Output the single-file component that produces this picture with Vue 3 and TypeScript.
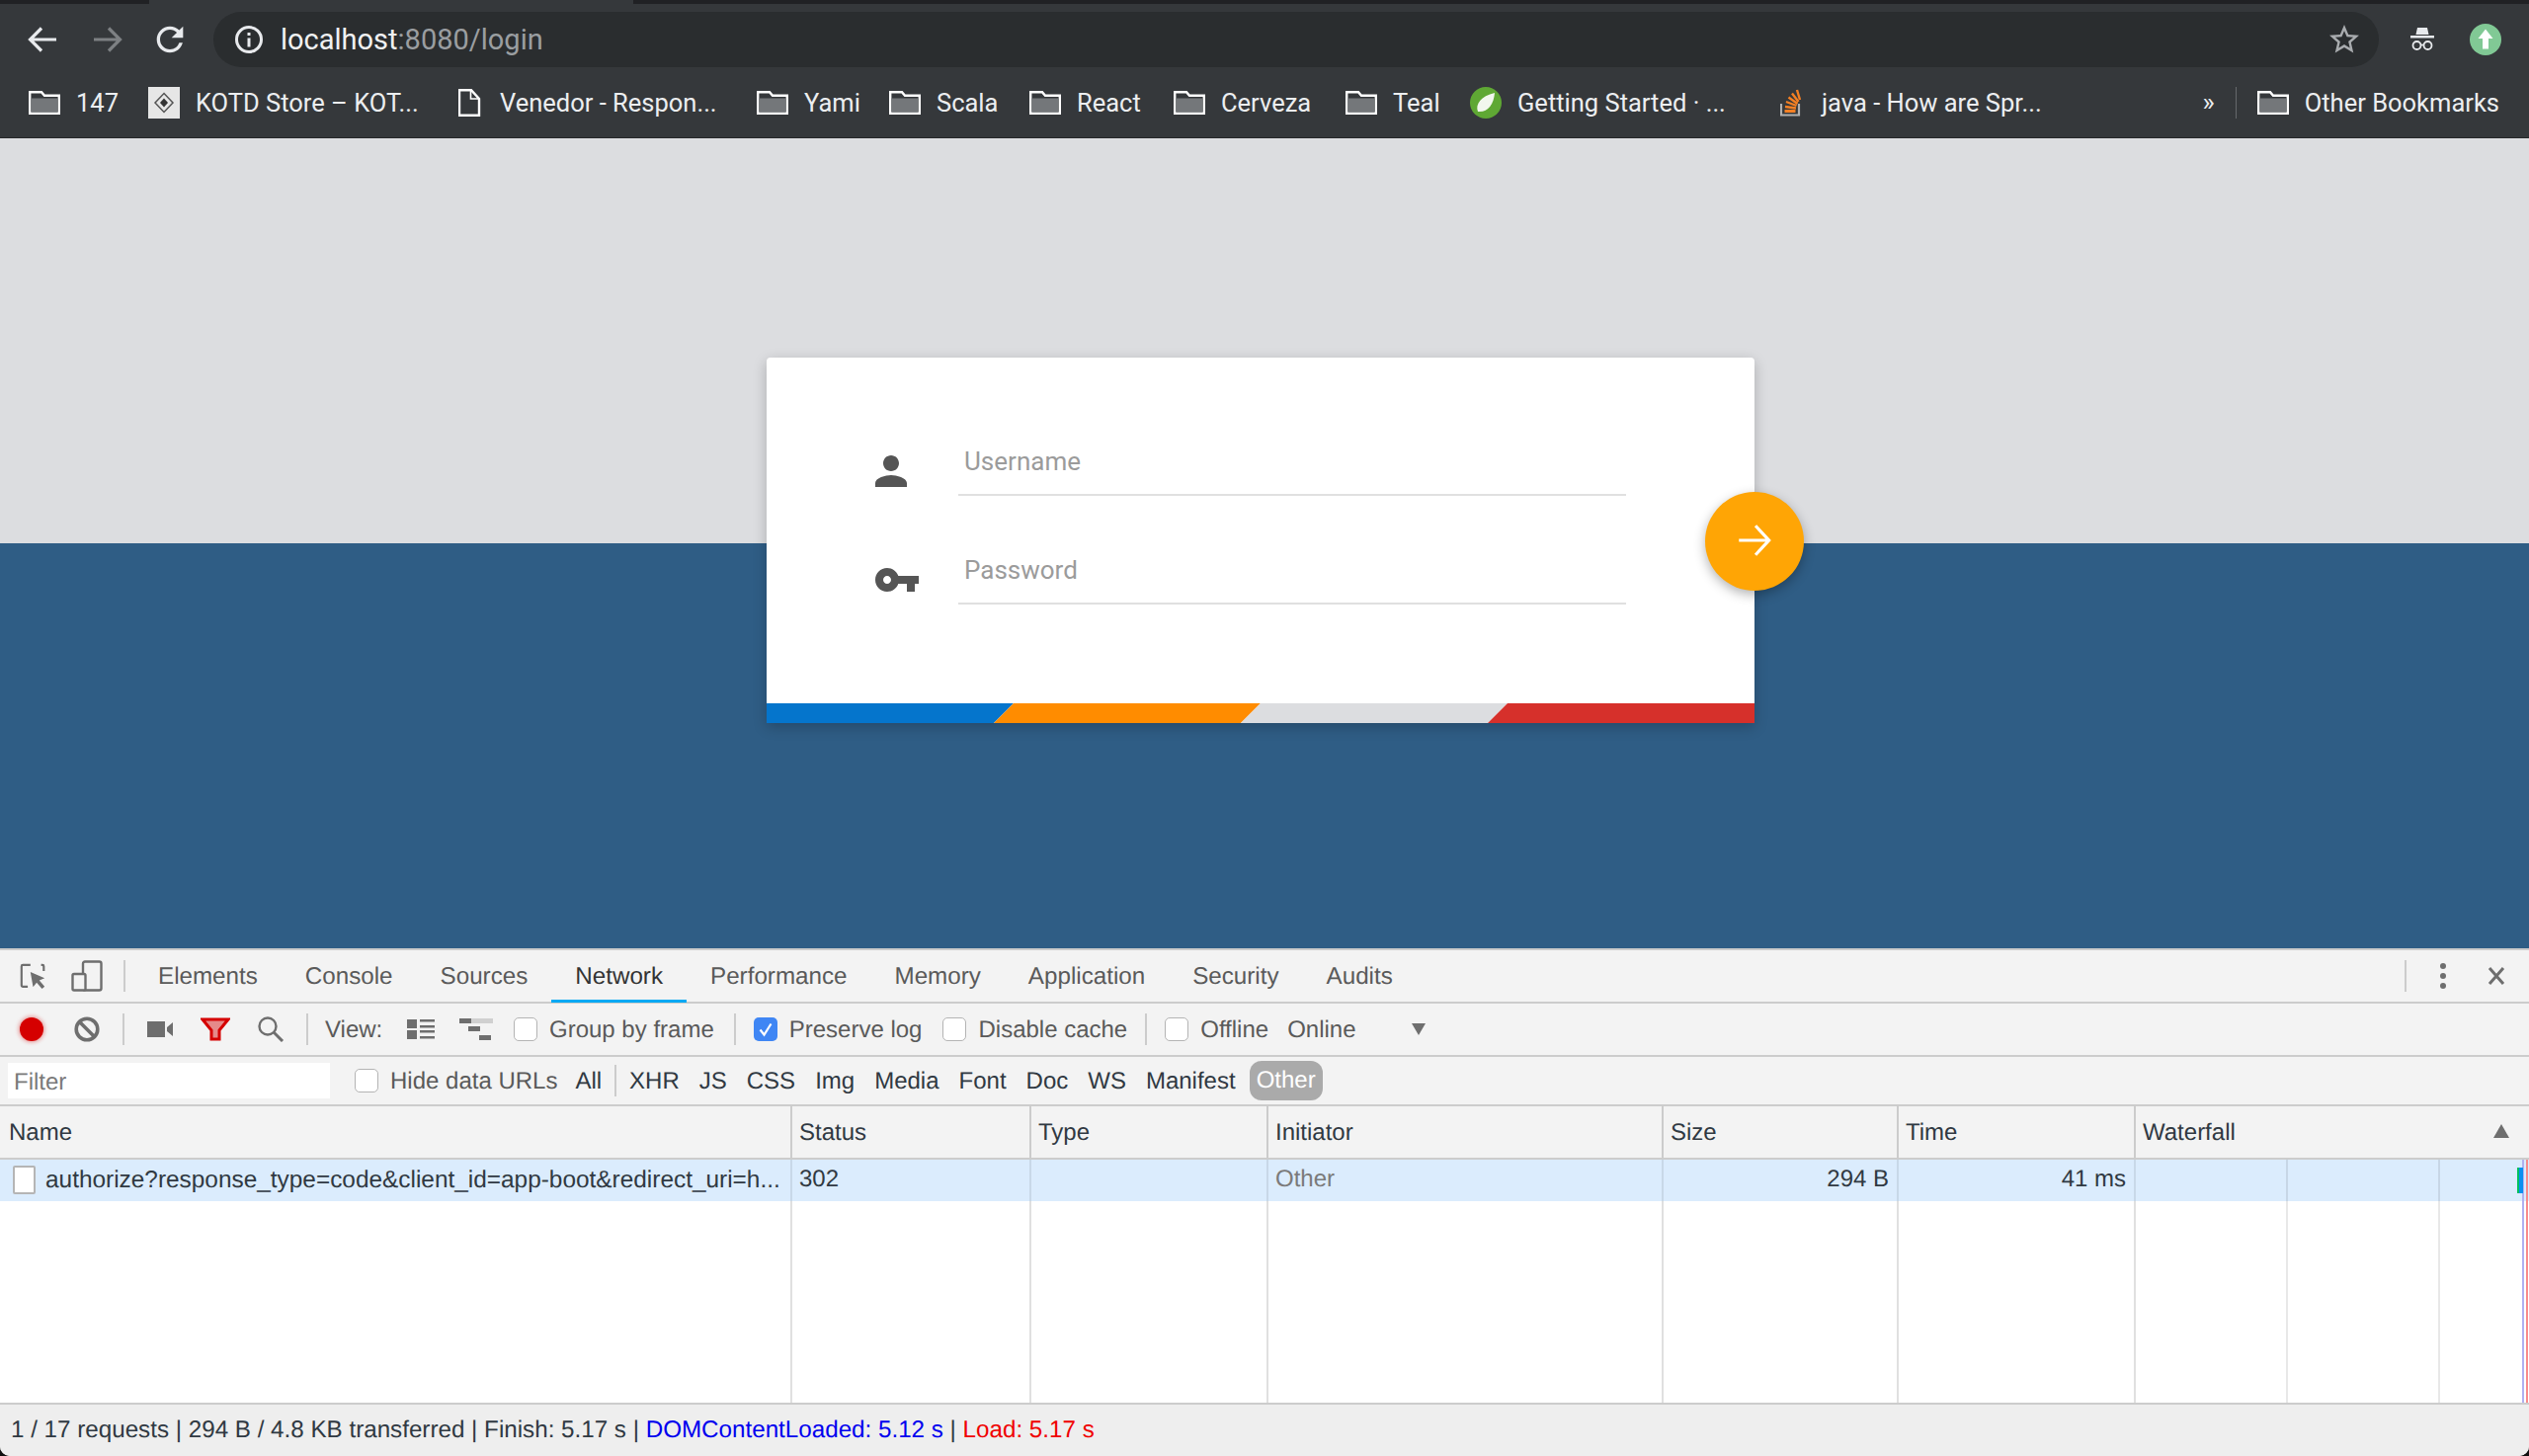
<script setup lang="ts">
type Mark = 'folder' | 'doc' | 'kotd' | 'spring' | 'so'
interface Bookmark { label: string; mark: Mark; width: number }

const bookmarks: Bookmark[] = [
  { label: '147', mark: 'folder', width: 121 },
  { label: 'KOTD Store – KOT...', mark: 'kotd', width: 314 },
  { label: 'Venedor - Respon...', mark: 'doc', width: 302 },
  { label: 'Yami', mark: 'folder', width: 134 },
  { label: 'Scala', mark: 'folder', width: 142 },
  { label: 'React', mark: 'folder', width: 146 },
  { label: 'Cerveza', mark: 'folder', width: 174 },
  { label: 'Teal', mark: 'folder', width: 126 },
  { label: 'Getting Started · ...', mark: 'spring', width: 314 },
  { label: 'java - How are Spr...', mark: 'so', width: 300 },
]
const tabs = ['Elements', 'Console', 'Sources', 'Network', 'Performance', 'Memory', 'Application', 'Security', 'Audits']
const types = ['XHR', 'JS', 'CSS', 'Img', 'Media', 'Font', 'Doc', 'WS', 'Manifest']
const columns = ['Name', 'Status', 'Type', 'Initiator', 'Size', 'Time', 'Waterfall']
</script>

<template>
  <div class="app">
    <header class="chrome">
      <div class="strip"><div class="active-tab"></div></div>
      <div class="toolbar">
        <svg class="nav" viewBox="0 0 40 40"><path d="M33 20H7M18 8.500 6.500 20 18 31.500" fill="none" stroke="#e8eaed" stroke-width="3.200" /></svg>
        <svg class="nav" viewBox="0 0 40 40"><path d="M7 20H33M22 8.500 33.500 20 22 31.500" fill="none" stroke="#7d8083" stroke-width="3.200" /></svg>
        <svg class="nav" viewBox="0 0 24 24"><path fill="#e8eaed" d="M17.650 6.350A7.958 7.958 0 0 0 12 4c-4.420 0-7.990 3.580-7.990 8s3.570 8 7.990 8c3.730 0 6.840-2.550 7.730-6h-2.080A5.990 5.990 0 0 1 12 18c-3.310 0-6-2.690-6-6s2.690-6 6-6c1.660 0 3.140.690 4.220 1.780L13 11h7V4l-2.350 2.350z" /></svg>
        <div class="omnibox">
          <svg class="info" viewBox="0 0 30 30">
            <circle cx="15" cy="15" r="12.500" fill="none" stroke="#e8eaed" stroke-width="3" />
            <rect x="13.500" y="13.500" width="3" height="9" fill="#e8eaed" />
            <rect x="13.500" y="8" width="3" height="3" fill="#e8eaed" />
          </svg>
          <span class="url">localhost<span class="url-dim">:8080/login</span></span>
          <svg class="star" viewBox="0 0 24 24"><path fill="#a9acaf" d="M22 9.240l-7.190-.620L12 2 9.190 8.630 2 9.240l5.460 4.730L5.820 21 12 17.270 18.180 21l-1.630-7.030L22 9.240zM12 15.400l-3.760 2.270 1-4.280-3.320-2.880 4.380-.380L12 6.100l1.710 4.040 4.380.380-3.320 2.880 1 4.280L12 15.400z" /></svg>
        </div>
        <svg class="nav" viewBox="0 0 40 40">
          <path d="M15 8h10l1.500 7h-13z" fill="#e8eaed" />
          <rect x="8" y="16" width="24" height="2.500" fill="#e8eaed" />
          <circle cx="14.500" cy="26" r="4" fill="none" stroke="#e8eaed" stroke-width="1.800" />
          <circle cx="25.500" cy="26" r="4" fill="none" stroke="#e8eaed" stroke-width="1.800" />
          <path d="M18.500 25.500h3" stroke="#e8eaed" stroke-width="1.600" />
        </svg>
        <svg class="nav" viewBox="0 0 40 40">
          <circle cx="20" cy="20" r="16" fill="#81c995" />
          <path d="M20 9.500 27.500 19H23v10.500h-6V19h-4.500z" fill="#fff" />
        </svg>
      </div>
      <div class="bookmarks">
        <div v-for="b in bookmarks" :key="b.label" class="bookmark" :style="{ width: b.width + 'px' }">
          <svg v-if="b.mark === 'folder'" class="mark" viewBox="0 0 32 24">
            <path d="M1.200 22.800V1.200H13l3 3.600h14.800v18z" fill="#35383b" stroke="#fff" stroke-width="2.400" />
            <rect x="2.400" y="7.500" width="27.200" height="14" fill="#74777a" />
          </svg>
          <span v-else-if="b.mark === 'kotd'" class="kotd">
            <svg class="mark-fill" viewBox="0 0 32 32">
              <path d="M16 6.500 25 16 16 25.500 7 16z" fill="none" stroke="#555" stroke-width="1.500" />
              <path d="M16 11.500 20 16 16 20.500 12 16z" fill="#333" />
            </svg>
          </span>
          <svg v-else-if="b.mark === 'doc'" class="mark narrow" viewBox="5 0 32 28">
            <path d="M6 1.200H18L26 10V26.800H6Z" fill="none" stroke="#fff" stroke-width="2.400" />
            <path d="M17.500 1.500V10H26" fill="none" stroke="#fff" stroke-width="1.600" />
          </svg>
          <svg v-else-if="b.mark === 'spring'" class="mark" viewBox="0 0 32 32">
            <circle cx="16" cy="16" r="16" fill="#5fa834" />
            <path d="M25 6C24 18 18 26 8 25 5 18 11 9 25 6z" fill="#f2f7ee" />
          </svg>
          <svg v-else class="mark narrow" viewBox="5 0 32 28">
            <path d="M6 15v11.500H24V15" fill="none" stroke="#b0b0b0" stroke-width="2.200" />
            <path d="M9.500 22.500h11" stroke="#f48024" stroke-width="3" />
            <path d="M10 18l11 1.500M11 13l10.500 4M13.500 8.500l9 6.500M17 4.500l6.500 8.500M22 1l3 10" fill="none" stroke="#f48024" stroke-width="2.400" />
          </svg>
          <span class="bookmark-label">{{ b.label }}</span>
        </div>
        <span class="more">»</span>
        <span class="bar-sep"></span>
        <div class="bookmark other">
          <svg class="mark" viewBox="0 0 32 24">
            <path d="M1.200 22.800V1.200H13l3 3.600h14.800v18z" fill="#35383b" stroke="#fff" stroke-width="2.400" />
            <rect x="2.400" y="7.500" width="27.200" height="14" fill="#74777a" />
          </svg>
          <span class="bookmark-label">Other Bookmarks</span>
        </div>
      </div>
    </header>

    <main class="page">
      <section class="card">
        <div class="form">
          <div class="form-row">
            <svg class="form-icon" viewBox="0 0 24 24"><path fill="#555" d="M12 12c2.210 0 4-1.790 4-4s-1.790-4-4-4-4 1.790-4 4 1.790 4 4 4zm0 2c-2.670 0-8 1.340-8 4v2h16v-2c0-2.660-5.330-4-8-4z" /></svg>
            <label class="field">Username</label>
          </div>
          <div class="form-row">
            <svg class="form-icon key" viewBox="0 0 24 24"><path fill="#555" d="M12.650 10C11.830 7.670 9.610 6 7 6c-3.310 0-6 2.690-6 6s2.690 6 6 6c2.610 0 4.830-1.670 5.650-4H17v4h4v-4h2v-4H12.650zM7 14c-1.100 0-2-.900-2-2s.900-2 2-2 2 .900 2 2-.900 2-2 2z" /></svg>
            <label class="field">Password</label>
          </div>
        </div>
        <svg class="stripe" viewBox="0 0 1000 20" preserveAspectRatio="none">
          <polygon points="0,0 250,0 230,20 0,20" fill="#0575cc" />
          <polygon points="250,0 500,0 480,20 230,20" fill="#ff8c00" />
          <polygon points="500,0 750,0 730,20 480,20" fill="#dcdde0" />
          <polygon points="750,0 1000,0 1000,20 730,20" fill="#d6302b" />
        </svg>
        <button class="fab" type="button" aria-label="Log in">
          <svg class="fab-arrow" viewBox="0 0 40 40"><path d="M5 20H34M21 6 34 20 21 34" fill="none" stroke="#fff" stroke-width="3" /></svg>
        </button>
      </section>
    </main>

    <section class="devtools">
      <nav class="dt-tabs">
        <svg class="inspect" viewBox="0 0 30 30">
          <path d="M12 2H3.500A1.500 1.500 0 0 0 2 3.500V25a1.500 1.500 0 0 0 1.500 1.500H9M24 2h1.500A1.500 1.500 0 0 1 27 3.500V9" fill="none" stroke="#6e6e6e" stroke-width="2.400" />
          <path d="M12 10 28 17l-6 2.500 6 7-3 2.500-6-7-4 5z" fill="#6e6e6e" />
        </svg>
        <svg class="device" viewBox="0 0 32 32">
          <rect x="12" y="1.500" width="18.500" height="29" rx="2" fill="none" stroke="#6e6e6e" stroke-width="2.400" />
          <rect x="1.500" y="14" width="13" height="16.500" rx="1.500" fill="#f3f3f3" stroke="#6e6e6e" stroke-width="2.400" />
        </svg>
        <span class="sep tab-sep"></span>
        <span v-for="t in tabs" :key="t" class="dt-tab" :class="{ on: t === 'Network' }">{{ t }}</span>
        <span class="grow"></span>
        <span class="sep"></span>
        <svg class="kebab" viewBox="0 0 8 30">
          <circle cx="4" cy="5" r="3" fill="#6e6e6e" />
          <circle cx="4" cy="15" r="3" fill="#6e6e6e" />
          <circle cx="4" cy="25" r="3" fill="#6e6e6e" />
        </svg>
        <svg class="close" viewBox="0 0 20 20"><path d="M3 2 17 18M17 2 3 18" stroke="#6e6e6e" stroke-width="3" /></svg>
      </nav>

      <div class="dt-toolbar">
        <span class="tool"><span class="record"></span></span>
        <span class="tool">
          <svg class="ic24" viewBox="0 0 26 26">
            <circle cx="13" cy="13" r="10.800" fill="none" stroke="#6e6e6e" stroke-width="3.600" />
            <path d="M5.500 5.500 20.500 20.500" stroke="#6e6e6e" stroke-width="3.600" />
          </svg>
        </span>
        <span class="sep"></span>
        <span class="tool">
          <svg class="ic24" viewBox="0 0 26 26"><path d="M0 5h18v16H0zM20 11l6-5v14l-6-5z" fill="#6e6e6e" /></svg>
        </span>
        <span class="tool">
          <svg class="ic-filter" viewBox="0 0 30 24"><path d="M2 2H28L19 13V22H11V13Z" fill="#e58a8a" stroke="#d50000" stroke-width="3" /></svg>
        </span>
        <span class="tool">
          <svg class="ic-search" viewBox="0 0 28 26">
            <circle cx="11" cy="10" r="8.500" fill="none" stroke="#6e6e6e" stroke-width="2.400" />
            <path d="M17 16 26 25" stroke="#6e6e6e" stroke-width="3" />
          </svg>
        </span>
        <span class="sep"></span>
        <span class="view-label">View:</span>
        <span class="tool">
          <svg class="ic-list" viewBox="0 0 28 20" fill="#6e6e6e">
            <path d="M0 0h10v9H0zM0 11h10v9H0zM13 0h15v2.500H13zM13 6h15v2.500H13zM13 11h15v2.500H13zM13 17h15v2.500H13z" />
          </svg>
        </span>
        <span class="tool">
          <svg class="ic-fall" viewBox="0 0 34 22">
            <rect x="12" y="0" width="22" height="5" fill="#d0d0d0" />
            <rect x="0" y="0" width="12" height="5" fill="#6e6e6e" />
            <rect x="9" y="8" width="12" height="5" fill="#6e6e6e" />
            <rect x="20" y="17" width="12" height="5" fill="#6e6e6e" />
          </svg>
        </span>
        <span class="check first-check"></span>
        <span class="opt">Group by frame</span>
        <span class="sep sep-opt"></span>
        <span class="check checked">
          <svg viewBox="0 0 24 24"><path d="M6.500 12.500 10.500 17.500 17.500 6.500" fill="none" stroke="#fff" stroke-width="2.200" /></svg>
        </span>
        <span class="opt">Preserve log</span>
        <span class="check next-check"></span>
        <span class="opt">Disable cache</span>
        <span class="sep sep-opt sep-last"></span>
        <span class="check"></span>
        <span class="opt">Offline</span>
        <span class="online">Online</span>
        <span class="caret"></span>
      </div>

      <div class="dt-filter">
        <div class="filter-input">Filter</div>
        <span class="check hide-check"></span>
        <span class="opt">Hide data URLs</span>
        <span class="type all">All</span>
        <span class="sep type-sep"></span>
        <span v-for="t in types" :key="t" class="type">{{ t }}</span>
        <span class="type pill">Other</span>
      </div>

      <div class="table">
        <div class="grid head">
          <div v-for="c in columns" :key="c" class="cell">{{ c }}</div>
          <span class="sort"></span>
        </div>
        <div class="grid row">
          <div class="cell name">
            <span class="doc-icon"></span>
            <span>authorize?response_type=code&amp;client_id=app-boot&amp;redirect_uri=h...</span>
          </div>
          <div class="cell">302</div>
          <div class="cell"></div>
          <div class="cell muted">Other</div>
          <div class="cell num">294 B</div>
          <div class="cell num">41 ms</div>
          <div class="cell"></div>
        </div>
        <div class="grid fill">
          <div v-for="c in columns" :key="c" class="cell"></div>
        </div>
        <div class="tick tick-a"></div>
        <div class="tick tick-b"></div>
        <div class="tick tick-dom"></div>
        <div class="tick tick-load"></div>
        <div class="bar"></div>
      </div>

      <footer class="status">
        <span>1 / 17 requests | 294 B / 4.8 KB transferred | Finish: 5.17 s | </span>
        <span class="blue">DOMContentLoaded: 5.12 s</span>
        <span> | </span>
        <span class="red">Load: 5.17 s</span>
      </footer>
    </section>
  </div>
</template>

<style scoped>
.app {
  width: 2560px;
  height: 1474px;
  display: flex;
  flex-direction: column;
  background: #111;
  overflow: hidden;
}

/* browser chrome */
.chrome {
  height: 140px;
  flex: none;
  display: flex;
  flex-direction: column;
  background: #35383b;
  border-bottom: 1px solid #26282a;
  box-sizing: border-box;
  font-family: Roboto, "Liberation Sans", sans-serif;
  color: #eceef0;
}
.strip {
  height: 4px;
  flex: none;
  background: #202124;
  padding-left: 151px;
}
.active-tab {
  width: 490px;
  height: 4px;
  background: #35383b;
}
.toolbar {
  height: 68px;
  flex: none;
  box-sizing: border-box;
  padding: 8px 0 4px 24px;
  display: flex;
  align-items: center;
  gap: 24px;
}
.nav {
  width: 40px;
  height: 40px;
  flex: none;
}
.omnibox {
  width: 2192px;
  height: 56px;
  flex: none;
  box-sizing: border-box;
  padding: 0 17px 0 21px;
  border-radius: 28px;
  background: #2a2d2f;
  display: flex;
  align-items: center;
  gap: 17px;
}
.info {
  width: 30px;
  height: 30px;
  flex: none;
}
.url {
  flex: 1;
  font-size: 29px;
  color: #f0f1f2;
  white-space: nowrap;
}
.url-dim {
  color: #9a9ea1;
}
.star {
  width: 36px;
  height: 36px;
  flex: none;
}
.bookmarks {
  flex: 1;
  display: flex;
  align-items: flex-start;
  padding: 16px 30px 0 29px;
  font-size: 25.5px;
}
.bookmark {
  height: 32px;
  flex: none;
  display: flex;
  align-items: center;
  gap: 16px;
  white-space: nowrap;
}
.bookmark-label {
  line-height: 32px;
}
.mark {
  width: 32px;
  height: 32px;
  flex: none;
}
.narrow {
  margin-right: -6px;
}
.kotd {
  width: 32px;
  height: 32px;
  flex: none;
  background: #e6e6e6;
}
.mark-fill {
  width: 32px;
  height: 32px;
  display: block;
}
.more {
  margin-left: auto;
  line-height: 30px;
  font-size: 26px;
}
.bar-sep {
  width: 1px;
  height: 32px;
  margin: 0 21px;
  background: #66696c;
}

/* login page */
.page {
  height: 820px;
  flex: none;
  box-sizing: border-box;
  padding: 222px 0 0 776px;
  background: linear-gradient(#dcdde0 0 410px, #2f5d85 410px);
}
.card {
  position: relative;
  width: 1000px;
  height: 370px;
  display: flex;
  flex-direction: column;
  border-radius: 4px 4px 0 0;
  background: #fff;
  box-shadow: 0 4px 14px rgba(0, 0, 0, 0.22);
  font-family: Roboto, "Liberation Sans", sans-serif;
}
.form {
  flex: 1;
  box-sizing: border-box;
  padding: 30px 0 0 102px;
}
.form-row {
  width: 870px;
  height: 110px;
  display: flex;
  align-items: flex-end;
  gap: 44px;
}
.form-icon {
  width: 48px;
  height: 48px;
  flex: none;
  margin-bottom: 1px;
}
.key {
  margin-left: 6px;
  margin-right: -6px;
}
.field {
  width: 676px;
  box-sizing: border-box;
  padding: 0 0 18px 6px;
  border-bottom: 2px solid #e0e0e0;
  font-size: 26px;
  line-height: 30px;
  color: #9b9b9b;
}
.stripe {
  width: 1000px;
  height: 20px;
  flex: none;
  display: block;
}
.fab {
  position: absolute;
  top: 136px;
  right: -50px;
  width: 100px;
  height: 100px;
  padding: 0;
  border: 0;
  border-radius: 50%;
  background: #ffa505;
  box-shadow: 0 4px 12px rgba(0, 0, 0, 0.3);
  display: flex;
  align-items: center;
  justify-content: center;
}
.fab-arrow {
  width: 42px;
  height: 42px;
  margin: -2px 0 0 -1px;
}

/* devtools */
.devtools {
  flex: 1;
  min-height: 0;
  display: flex;
  flex-direction: column;
  overflow: hidden;
  border-radius: 0 0 10px 10px;
  background: #f3f3f3;
  border-top: 2px solid #cccccc;
  font-family: "Liberation Sans", Arial, sans-serif;
  font-size: 24px;
  text-rendering: geometricPrecision;
  color: #303942;
}
.dt-tabs {
  height: 54px;
  flex: none;
  box-sizing: border-box;
  padding-left: 20px;
  display: flex;
  align-items: center;
  border-bottom: 2px solid #cccccc;
}
.inspect {
  width: 27px;
  height: 27px;
  flex: none;
}
.device {
  width: 32px;
  height: 32px;
  flex: none;
  margin-left: 25px;
}
.sep {
  width: 2px;
  height: 32px;
  flex: none;
  background: #cccccc;
}
.tab-sep {
  margin: 0 9px 0 21px;
}
.dt-tab {
  height: 52px;
  box-sizing: border-box;
  padding: 0 24px;
  font-size: 24.2px;
  line-height: 51px;
  color: #5a5a5a;
  border-bottom: 3px solid transparent;
  margin-bottom: -2px;
  white-space: nowrap;
}
.dt-tab.on {
  color: #333;
  border-bottom-color: #03a9f4;
}
.grow {
  flex: 1;
}
.kebab {
  width: 8px;
  height: 30px;
  flex: none;
  margin-left: 33px;
}
.close {
  width: 20px;
  height: 20px;
  flex: none;
  margin: 0 23px 0 40px;
}
.dt-toolbar {
  height: 54px;
  flex: none;
  box-sizing: border-box;
  padding-left: 4px;
  display: flex;
  align-items: center;
  border-bottom: 2px solid #cccccc;
  color: #5a5a5a;
}
.dt-toolbar > .sep {
  margin: 0 8px;
}
.tool {
  width: 56px;
  height: 40px;
  flex: none;
  display: flex;
  align-items: center;
  justify-content: center;
}
.record {
  width: 24px;
  height: 24px;
  border-radius: 50%;
  background: #d50000;
  box-shadow: 0 0 4px 1px rgba(213, 0, 0, 0.4);
}
.ic24 {
  width: 26px;
  height: 26px;
}
.ic-filter {
  width: 30px;
  height: 24px;
}
.ic-search {
  width: 28px;
  height: 26px;
}
.ic-list {
  width: 28px;
  height: 20px;
}
.ic-fall {
  width: 34px;
  height: 22px;
}
.view-label {
  margin: 0 11px 0 9px;
  width: 58px;
  padding-top: 1px;
}
.check {
  width: 24px;
  height: 24px;
  flex: none;
  box-sizing: border-box;
  border: 1px solid #b4b4b4;
  border-radius: 5px;
  background: #fff;
}
.checked {
  border: 0;
  background: #3f86f4;
}
.checked svg {
  display: block;
}
.opt {
  margin-left: 12px;
  padding-top: 1px;
  white-space: nowrap;
  color: #5a5a5a;
}
.first-check {
  margin-left: 10px;
}
.dt-toolbar > .sep-opt {
  margin: 0 18px 0 20px;
}
.dt-toolbar > .sep-last {
  margin: 0 18px 0 18px;
}
.next-check {
  margin-left: 21px;
}
.online {
  margin-left: 19px;
  padding-top: 1px;
}
.caret {
  width: 0;
  height: 0;
  margin-left: 56px;
  border-left: 7px solid transparent;
  border-right: 7px solid transparent;
  border-top: 12px solid #6e6e6e;
}
.dt-filter {
  height: 50px;
  flex: none;
  box-sizing: border-box;
  padding-left: 8px;
  display: flex;
  align-items: center;
  border-bottom: 2px solid #cccccc;
}
.filter-input {
  width: 326px;
  height: 36px;
  flex: none;
  box-sizing: border-box;
  padding-left: 6px;
  background: #fff;
  color: #7a7a7a;
  line-height: 39px;
}
.hide-check {
  margin-left: 25px;
}
.type {
  margin-left: 20px;
  padding-top: 1px;
  white-space: nowrap;
}
.all {
  margin-left: 18px;
}
.type-sep {
  margin: 0 13px;
  padding: 0;
  height: 32px;
}
.type-sep + .type {
  margin-left: 0;
}
.pill {
  margin-left: 14px;
  padding: 0 7px;
  height: 40px;
  line-height: 40px;
  border-radius: 12px;
  background: #aaaaaa;
  color: #fff;
}
.table {
  position: relative;
  flex: 1;
  min-height: 0;
  display: flex;
  flex-direction: column;
  background: #fff;
  border-bottom: 2px solid #cccccc;
}
.grid {
  display: grid;
  grid-template-columns: 802px 242px 240px 400px 238px 240px 1fr;
}
.cell {
  box-sizing: border-box;
  min-width: 0;
  padding: 0 6px 0 7px;
  border-right: 2px solid #cccccc;
  white-space: nowrap;
}
.cell:last-of-type {
  border-right: 0;
}
.head {
  position: relative;
  height: 54px;
  flex: none;
  background: #f3f3f3;
  border-bottom: 2px solid #cccccc;
  box-sizing: border-box;
  line-height: 53px;
}
.head .cell:first-child {
  padding-left: 9px;
}
.sort {
  position: absolute;
  top: 18px;
  right: 20px;
  width: 0;
  height: 0;
  border-left: 8px solid transparent;
  border-right: 8px solid transparent;
  border-bottom: 14px solid #6e6e6e;
}
.row {
  height: 42px;
  flex: none;
  background: #dbecfd;
  line-height: 39px;
}
.row .cell {
  border-right-color: #c8d8e8;
}
.name {
  display: flex;
  align-items: center;
  gap: 10px;
  padding-left: 13px;
  padding-bottom: 2px;
  font-size: 24.4px;
}
.doc-icon {
  width: 23px;
  height: 29px;
  flex: none;
  box-sizing: border-box;
  background: #fff;
  border: 2px solid #b5b5b5;
  border-radius: 2px;
}
.muted {
  color: #7a7a7a;
}
.num {
  text-align: right;
  padding-right: 8px;
}
.fill {
  flex: 1;
}
.fill .cell {
  border-right-color: #e0e0e0;
}
.tick {
  position: absolute;
  top: 54px;
  bottom: 0;
  width: 2px;
  background: rgba(0, 0, 0, 0.09);
}
.tick-a {
  left: 2314px;
}
.tick-b {
  left: 2468px;
}
.tick-dom {
  left: 2553px;
  background: #b0b0f0;
}
.tick-load {
  left: 2557px;
  background: #f88a8a;
}
.bar {
  position: absolute;
  top: 62px;
  left: 2548px;
  width: 6px;
  height: 26px;
  background: linear-gradient(90deg, #00c060 0 2px, #0a8ff0 2px);
}
.status {
  height: 52px;
  flex: none;
  box-sizing: border-box;
  padding-left: 11px;
  background: #eeeeee;
  font-size: 24.2px;
  line-height: 52px;
  white-space: pre;
}
.blue {
  color: #0000ee;
}
.red {
  color: #f00000;
}
</style>

<style>
html,
body {
  margin: 0;
  background: #111;
}
</style>
